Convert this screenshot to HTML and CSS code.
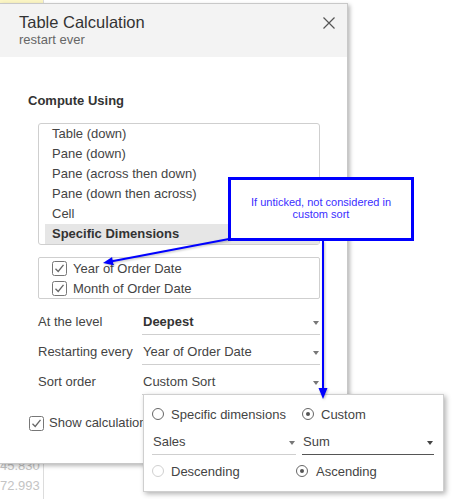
FILE: index.html
```html
<!DOCTYPE html>
<html>
<head>
<meta charset="utf-8">
<link rel="stylesheet" href="styles.css">
</head>
<body>
<div class="sheet">
  <div class="col">
    <div class="yellow"></div>
    <div class="cells">
      <div class="cell">12.410</div>
      <div class="cell">45.830</div>
      <div class="cell">72.993</div>
    </div>
  </div>
</div>

<div class="dialog">
  <div class="head">
    <div class="titles">
      <div class="title">Table Calculation</div>
      <div class="subtitle">restart ever</div>
    </div>
    <svg class="close" width="12" height="12" viewBox="0 0 12 12"><path d="M0.5 0.5 L11.5 11.5 M11.5 0.5 L0.5 11.5" stroke="#555" stroke-width="1.2" fill="none"/></svg>
  </div>
  <div class="body">
    <div class="section">Compute Using</div>
    <div class="list">
      <div class="item">Table (down)</div>
      <div class="item">Pane (down)</div>
      <div class="item">Pane (across then down)</div>
      <div class="item">Pane (down then across)</div>
      <div class="item">Cell</div>
      <div class="item sel">Specific Dimensions</div>
    </div>
    <div class="dims">
      <div class="dim"><svg class="cb" width="15" height="15" viewBox="0 0 15 15"><rect x="0.5" y="0.5" width="14" height="14" rx="2" fill="#fff" stroke="#777"/><path d="M3.5 7.8 L6.2 10.5 L11.5 3.8" stroke="#666" stroke-width="1.3" fill="none"/></svg><span>Year of Order Date</span></div>
      <div class="dim"><svg class="cb" width="15" height="15" viewBox="0 0 15 15"><rect x="0.5" y="0.5" width="14" height="14" rx="2" fill="#fff" stroke="#777"/><path d="M3.5 7.8 L6.2 10.5 L11.5 3.8" stroke="#666" stroke-width="1.3" fill="none"/></svg><span>Month of Order Date</span></div>
    </div>
    <div class="fields">
      <div class="field"><div class="label">At the level</div><div class="value bold"><span>Deepest</span><i class="tri"></i></div></div>
      <div class="field"><div class="label">Restarting every</div><div class="value"><span>Year of Order Date</span><i class="tri"></i></div></div>
      <div class="field"><div class="label">Sort order</div><div class="value"><span>Custom Sort</span><i class="tri"></i></div></div>
    </div>
    <div class="assist"><svg class="cb" width="15" height="15" viewBox="0 0 15 15"><rect x="0.5" y="0.5" width="14" height="14" rx="2" fill="#fff" stroke="#777"/><path d="M3.5 7.8 L6.2 10.5 L11.5 3.8" stroke="#666" stroke-width="1.3" fill="none"/></svg><span>Show calculation</span></div>
  </div>
</div>

<div class="popup">
  <div class="prow r1">
    <div class="opt w150"><i class="radio"></i><span>Specific dimensions</span></div>
    <div class="opt"><i class="radio on"></i><span>Custom</span></div>
  </div>
  <div class="prow r2">
    <div class="dd sales"><span>Sales</span><i class="tri"></i></div>
    <div class="dd sum"><span>Sum</span><i class="tri dark"></i></div>
  </div>
  <div class="prow r3">
    <div class="opt w144"><i class="radio off"></i><span>Descending</span></div>
    <div class="opt asc"><i class="radio on"></i><span>Ascending</span></div>
  </div>
</div>

<div class="callout"><div class="ctext">If unticked, not considered in<br>custom sort</div></div>

<svg class="arrows" width="452" height="499" viewBox="0 0 452 499">
  <line x1="229" y1="239" x2="112" y2="261.2" stroke="#0000ff" stroke-width="2"/>
  <polygon points="103,263 113.6,265.2 112.1,256.9" fill="#0000ff"/>
  <line x1="323" y1="241" x2="323" y2="390" stroke="#0000ff" stroke-width="2"/>
  <polygon points="318.5,388 327.5,388 323,399" fill="#0000ff"/>
</svg>
</body>
</html>
```

FILE: styles.css
```css
html, body {
  margin: 0;
  padding: 0;
}
body {
  width: 452px;
  height: 499px;
  overflow: hidden;
  background: #fff;
  position: relative;
  font-family: "Liberation Sans", Arial, sans-serif;
  font-size: 13px;
  color: #333;
}
.sheet {
  height: 499px;
}
.col {
  width: 43px;
  height: 499px;
  border-right: 1px solid #dcdcdc;
  display: flex;
  flex-direction: column;
}
.yellow {
  height: 3px;
  background: #fbf5c4;
}
.cells {
  flex: 1;
  display: flex;
  flex-direction: column;
  justify-content: flex-end;
  padding-bottom: 3px;
}
.cell {
  height: 20px;
  line-height: 20px;
  text-align: right;
  padding-right: 4px;
  color: #c4c4c4;
  font-size: 13px;
}

.dialog {
  position: absolute;
  left: -1px;
  top: 3px;
  width: 349px;
  height: 461px;
  box-sizing: border-box;
  border: 1px solid #c8c8c8;
  background: #fff;
  box-shadow: 2px 2px 4px rgba(0,0,0,0.28);
}
.head {
  height: 53px;
  background: #f3f3f3;
  display: flex;
  justify-content: space-between;
  align-items: flex-start;
  padding: 8px 12px 0 19px;
  box-sizing: border-box;
}
.title {
  font-size: 16.5px;
  line-height: 20px;
  color: #333;
}
.subtitle {
  font-size: 13px;
  line-height: 16px;
  color: #666;
}
.close {
  margin-top: 5px;
  display: block;
}
.body {
  padding-left: 28px;
  padding-top: 36px;
}
.section {
  font-weight: bold;
  line-height: 16px;
  color: #333;
}
.list {
  margin-top: 14px;
  margin-left: 10px;
  width: 282px;
  height: 122px;
  box-sizing: border-box;
  border: 1px solid #cfcfcf;
  border-radius: 3px;
}
.item {
  height: 20px;
  line-height: 20px;
  margin-left: 6px;
  padding-left: 7px;
  color: #444;
}
.item.sel {
  background: #e6e6e6;
  font-weight: bold;
  color: #333;
}
.dims {
  margin-top: 12px;
  margin-left: 10px;
  width: 282px;
  height: 42px;
  box-sizing: border-box;
  border: 1px solid #cfcfcf;
  border-radius: 2px;
}
.dim {
  height: 20px;
  display: flex;
  align-items: center;
  padding-left: 13px;
  gap: 6px;
  color: #444;
}
.cb {
  display: block;
  flex: none;
}
.fields {
  margin-top: 6px;
  margin-left: 10px;
}
.field {
  display: flex;
  height: 30px;
}
.label {
  width: 104px;
  padding-top: 9px;
  line-height: 16px;
  color: #444;
}
.value {
  width: 178px;
  box-sizing: border-box;
  border-bottom: 1px solid #cfcfcf;
  padding: 9px 1px 4px 1px;
  line-height: 16px;
  display: flex;
  justify-content: space-between;
  align-items: center;
  color: #444;
}
.value.bold span {
  font-weight: bold;
  color: #333;
}
.tri {
  display: block;
  width: 0;
  height: 0;
  border-left: 3.5px solid transparent;
  border-right: 3.5px solid transparent;
  border-top: 4px solid #777;
  margin-top: 1px;
}
.tri.dark {
  border-top-color: #444;
}
.assist {
  margin-top: 20px;
  margin-left: 1px;
  display: flex;
  align-items: center;
  gap: 5px;
  line-height: 16px;
  color: #444;
}

.popup {
  position: absolute;
  left: 143px;
  top: 394px;
  width: 301px;
  height: 98px;
  box-sizing: border-box;
  border: 1px solid #cfcfcf;
  background: #fff;
  box-shadow: 2px 2px 5px rgba(0,0,0,0.3);
  padding: 9px 0 0 8px;
}
.prow {
  display: flex;
}
.r1, .r3 {
  height: 20px;
}
.r2 {
  margin-top: 4px;
  gap: 6px;
}
.r3 {
  margin-top: 6px;
}
.opt {
  display: flex;
  align-items: center;
  gap: 7px;
  color: #444;
}
.w150 { width: 150px; }
.w144 { width: 144px; }
.asc { gap: 8px; }
.radio {
  display: block;
  width: 12px;
  height: 12px;
  box-sizing: border-box;
  border: 1px solid #666;
  border-radius: 50%;
  position: relative;
  flex: none;
}
.radio.on::after {
  content: "";
  position: absolute;
  left: 3px;
  top: 3px;
  width: 4px;
  height: 4px;
  border-radius: 50%;
  background: #555;
}
.radio.off {
  border-color: #d0d0d0;
}
.dd {
  box-sizing: border-box;
  height: 27px;
  padding: 6px 1px 4px 1px;
  line-height: 16px;
  display: flex;
  justify-content: space-between;
  align-items: center;
  color: #444;
}
.sales {
  width: 144px;
  border-bottom: 1px solid #cfcfcf;
}
.sum {
  width: 132px;
  border-bottom: 1px solid #555;
}

.callout {
  position: absolute;
  left: 228px;
  top: 177px;
  width: 186px;
  height: 64px;
  box-sizing: border-box;
  border: 3px solid #0000ff;
  background: #fff;
  display: flex;
  align-items: center;
  justify-content: center;
  padding-bottom: 3px;
}
.ctext {
  font-family: "Liberation Sans", Arial, sans-serif;
  font-size: 11px;
  line-height: 12px;
  color: #3a2eff;
  text-align: center;
}
.arrows {
  position: absolute;
  left: 0;
  top: 0;
  pointer-events: none;
  filter: drop-shadow(1.5px 1.5px 1px rgba(0,0,0,0.25));
}
```
